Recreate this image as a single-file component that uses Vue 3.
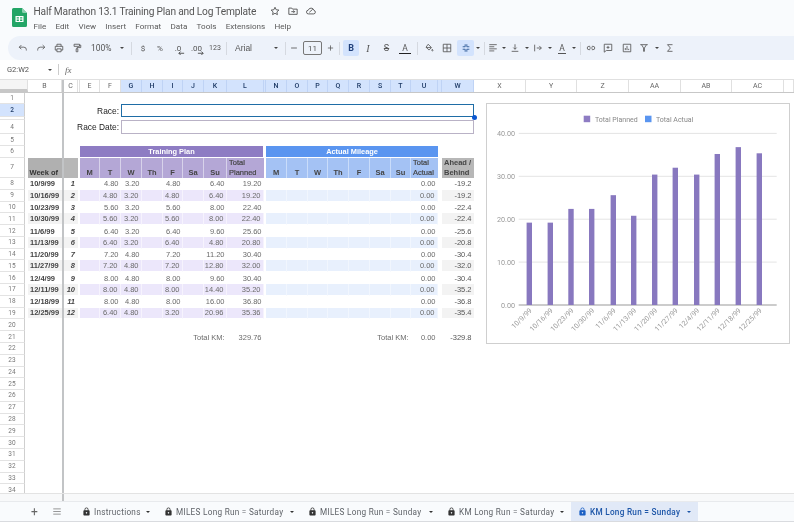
<script setup>
const colWidths = [25,3,34,2,14,2,20,21,21,21,20,21,23,37,2,21,21,20,21,21,21,20,27,4,32,52,51,52,52,51,52,10]
const gridCols = colWidths.map(w => w + 'px').join(' ')
const colNames = ['','','B','','C','','E','F','G','H','I','J','K','L','','N','O','P','Q','R','S','T','U','','W','X','Y','Z','AA','AB','AC','']
const headCells = colNames.map((name, i) => ({
  name, selected: i >= 8 && i <= 24, corner: i === 0, freeze: i === 3, hidden: name === '' && i > 3 && i < 25
}))

const menus = ['File','Edit','View','Insert','Format','Data','Tools','Extensions','Help']
const icons = {
  undo: 'M8 5 3 10l5 5M3 10h11a6 6 0 0 1 6 6v2',
  redo: 'M16 5l5 5-5 5M21 10H10a6 6 0 0 0-6 6v2',
  print: 'M7 8V3h10v5M7 17H3V8h18v9h-4M7 14h10v7H7z',
  paint: 'M5 3h13v5H5zM18 5h3v6h-9v3M10 14h4v7h-4z',
  fill: 'M10 3l8 8-6 6-7-7zM5 11h12M20 15c1 2 2 3 1 4s-2 0-2-1 0-1 1-3z',
  borders: 'M3 3h18v18H3zM12 3v18M3 12h18',
  merge: 'M10 3v6H4M14 3v6h6M10 21v-6H4M14 21v-6h6',
  align: 'M3 4h18M3 9h12M3 14h18M3 19h12',
  valign: 'M12 3v12M8 11l4 4 4-4M4 20h16',
  wrap: 'M4 4v16M9 12h11M15 7l5 5-5 5',
  link: 'M10 8H7a4 4 0 0 0 0 8h3M14 8h3a4 4 0 0 1 0 8h-3M8 12h8',
  comment: 'M3 3h18v15H8l-5 4zM12 7v7M8.5 10.5h7',
  chart: 'M3 3h18v18H3zM8 17v-5M12 17V7M16 17v-3',
  filter: 'M3 4h18M6 4l5 8v8h2v-8l5-8',
  sigma: 'M18 4H6l7 8-7 8h12',
  minus: 'M5 12h14',
  plus: 'M5 12h14M12 5v14'
}
const toolbar = [
  { w: 18, icon: 'undo' }, { w: 18, icon: 'redo' }, { w: 18, icon: 'print' }, { w: 17, icon: 'paint' },
  { w: 42, text: '100%', caret: true, cls: 'zoom' }, { w: 8, sep: true },
  { w: 16, text: '$' }, { w: 18, text: '%' }, { w: 18, text: '.0', arrow: 'l' }, { w: 19, text: '.00', arrow: 'r' }, { w: 18, text: '123', cls: 'small' },
  { w: 4, sep: true },
  { w: 53, text: 'Arial', caret: true, cls: 'font' }, { w: 8, sep: true },
  { w: 10, icon: 'minus' }, { w: 27, box: '11' }, { w: 9, icon: 'plus' }, { w: 8, sep: true },
  { w: 16, text: 'B', cls: 'bold on' }, { w: 18, text: 'I', cls: 'ital' }, { w: 19, text: 'S', cls: 'strike' },
  { w: 18, text: 'A', cls: 'colorA' }, { w: 6, sep: true },
  { w: 17, icon: 'fill' }, { w: 20, icon: 'borders' }, { w: 17, icon: 'merge', cls: 'on' }, { w: 8, caretOnly: true }, { w: 4, sep: true },
  { w: 14, icon: 'align' }, { w: 7, caretOnly: true }, { w: 16, icon: 'valign' }, { w: 7, caretOnly: true },
  { w: 16, icon: 'wrap' }, { w: 8, caretOnly: true }, { w: 16, text: 'A', cls: 'rot' }, { w: 7, caretOnly: true }, { w: 6, sep: true },
  { w: 15, icon: 'link' }, { w: 20, icon: 'comment' }, { w: 17, icon: 'chart' }, { w: 18, icon: 'filter' }, { w: 7, caretOnly: true }, { w: 20, icon: 'sigma' }
]

const dates = ['10/9/99','10/16/99','10/23/99','10/30/99','11/6/99','11/13/99','11/20/99','11/27/99','12/4/99','12/11/99','12/18/99','12/25/99']
const plan = [
  ['', '4.80','3.20','','4.80','','6.40','19.20'],
  ['', '4.80','3.20','','4.80','','6.40','19.20'],
  ['', '5.60','3.20','','5.60','','8.00','22.40'],
  ['', '5.60','3.20','','5.60','','8.00','22.40'],
  ['', '6.40','3.20','','6.40','','9.60','25.60'],
  ['', '6.40','3.20','','6.40','','4.80','20.80'],
  ['', '7.20','4.80','','7.20','','11.20','30.40'],
  ['', '7.20','4.80','','7.20','','12.80','32.00'],
  ['', '8.00','4.80','','8.00','','9.60','30.40'],
  ['', '8.00','4.80','','8.00','','14.40','35.20'],
  ['', '8.00','4.80','','8.00','','16.00','36.80'],
  ['', '6.40','4.80','','3.20','','20.96','35.36']
]
const behind = ['-19.2','-19.2','-22.4','-22.4','-25.6','-20.8','-30.4','-32.0','-30.4','-35.2','-36.8','-35.4']
const days = ['M','T','W','Th','F','Sa','Su']

const c = (text = '', cls = '', span = 1) => ({ text, cls, span })
const blanks = n => (n > 0 ? [c('', '', n)] : [])

function buildRow(n) {
  const edge = [c('', 'cellA'), ]
  if (n === 2 || n === 4) {
    return [...edge, c(), c('', 'fz'), c(n === 2 ? 'Race:' : 'Race Date:', 'lbl', 4),
      c('', n === 2 ? 'inp sel' : 'inp', 17), ...blanks(7)]
  }
  if (n === 6) {
    return [...edge, c(), c('', 'fz'), c(), c(), c('Training Plan', 'band purple', 8), c(),
      c('Actual Mileage', 'band blue', 8), c(), c(), ...blanks(7)]
  }
  if (n === 7) {
    return [...edge, c('Week of', 'weekhd'), c('', 'fz'), c('', 'chd'), c(),
      ...days.map(d => c(d, 'sub lp')), c('Total Planned', 'sub lp tot'), c(),
      ...days.map(d => c(d, 'sub lb')), c('Total Actual', 'sub lb tot'), c(),
      c('Ahead / Behind', 'ahead'), ...blanks(7)]
  }
  if (n >= 8 && n <= 19) {
    const i = n - 8
    const alt = i % 2 === 1
    const p = alt ? 'num pshade' : 'num'
    const a = alt ? 'num bshade' : 'num'
    return [...edge, c(dates[i], alt ? 'date dshade' : 'date'), c('', 'fz'),
      c(String(i + 1), alt ? 'wk dshade' : 'wk'), c(),
      ...plan[i].map(v => c(v, p)), c(),
      ...days.map(() => c('', a)), c('0.00', a), c(),
      c(behind[i], alt ? 'num dim dshade' : 'num dim'), ...blanks(7)]
  }
  if (n === 21) {
    return [...edge, c(), c('', 'fz'), c(), c(), ...blanks(6), c('Total KM:', 'num'), c('329.76', 'num'), c(),
      ...blanks(6), c('Total KM:', 'num'), c('0.00', 'num'), c(), c('-329.8', 'num dim'), ...blanks(7)]
  }
  return [...edge, c(), c('', 'fz'), ...blanks(28)]
}

const heights = { 1: 11, 2: 13, 3: 3, 4: 14, 5: 12, 6: 11.5, 7: 20.5 }
const rows = Array.from({ length: 34 }, (_, k) => {
  const n = k + 1
  return { n, h: (heights[n] || 11.79) + 'px', cells: buildRow(n) }
})

// chart
const yFor = v => 305 - v * 4.29
const ticks = [0, 10, 20, 30, 40].map(v => ({ v, label: v.toFixed(2), y: yFor(v) }))
const xs = [529.3,550.3,571,591.7,613.3,633.7,654.7,675.3,696.7,717.3,738.3,759.3]
const totals = [19.2,19.2,22.4,22.4,25.6,20.8,30.4,32,30.4,35.2,36.8,35.36]
const bars = xs.map((x, i) => ({ x, y: yFor(totals[i]), h: totals[i] * 4.29, date: dates[i] }))

const tabs = [
  { name: 'Instructions', w: 82 },
  { name: 'MILES Long Run = Saturday', w: 144 },
  { name: 'MILES Long Run = Sunday', w: 139 },
  { name: 'KM Long Run = Saturday', w: 131 },
  { name: 'KM Long Run = Sunday', w: 127, active: true }
]
const lock = 'M18 8h-1V6c0-2.76-2.24-5-5-5S7 3.24 7 6v2H6c-1.1 0-2 .9-2 2v10c0 1.1.9 2 2 2h12c1.1 0 2-.9 2-2V10c0-1.1-.9-2-2-2zm-6 9c-1.1 0-2-.9-2-2s.9-2 2-2 2 .9 2 2-.9 2-2 2zm3.1-9H8.9V6c0-1.71 1.39-3.1 3.1-3.1 1.71 0 3.1 1.39 3.1 3.1v2z'
</script>

<template>
  <div class="app">
    <header class="top">
      <svg class="logo" viewBox="0 0 15 19" width="15" height="19">
        <path d="M1.5 0H10l5 5v12.5a1.5 1.5 0 0 1-1.5 1.5h-12A1.5 1.5 0 0 1 0 17.500V1.500A1.500 1.500 0 0 1 1.500 0z" fill="#23a566"/>
        <path d="M10 0l5 5h-3.500A1.500 1.500 0 0 1 10 3.500z" fill="#8ed1b1"/>
        <path d="M3.500 8h8v6h-8zM4.700 9.200v1.300h2.200V9.200zm3.400 0v1.300h2.200V9.200zm-3.400 2.400v1.300h2.200v-1.300zm3.400 0v1.300h2.200v-1.300z" fill="#fff" fill-rule="evenodd"/>
      </svg>
      <div class="titles">
        <div class="title-row">
          <span class="doc-title">Half Marathon 13.1 Training Plan and Log Template</span>
          <svg class="ti star" viewBox="0 0 24 24"><path d="M12 3l2.800 6 6.500.8-4.800 4.400 1.300 6.500L12 17.500 6.200 20.700l1.300-6.500L2.700 9.800 9.200 9z"/></svg>
          <svg class="ti" viewBox="0 0 24 24"><path d="M2 5h7l2 2.500h11V20H2zM8 13.500h8M13 10.500l3 3-3 3"/></svg>
          <svg class="ti" viewBox="0 0 24 24"><path d="M6 19a4.500 4.500 0 0 1-.5-9A7 7 0 0 1 19 10.500 4.300 4.300 0 0 1 18.500 19zM8 15l8-7"/></svg>
        </div>
        <nav class="menus"><span v-for="m in menus" :key="m">{{ m }}</span></nav>
      </div>
    </header>

    <div class="toolbar">
      <div v-for="(t, i) in toolbar" :key="i" class="tool" :class="t.cls" :style="{ width: t.w + 'px' }">
        <span v-if="t.sep" class="sep"></span>
        <span v-else-if="t.caretOnly" class="caret"></span>
        <span v-else-if="t.box" class="sizebox">{{ t.box }}</span>
        <svg v-else-if="t.icon" class="ic" viewBox="0 0 24 24"><path :d="icons[t.icon]"/></svg>
        <template v-else>
          <span class="tt">{{ t.text }}</span>
          <svg v-if="t.arrow" class="arr" viewBox="0 0 8 5"><path :d="t.arrow === 'l' ? 'M7 2.500H1M3 .5 1 2.500l2 2' : 'M1 2.500h6M5 .5l2 2-2 2'"/></svg>
          <span v-if="t.caret" class="caret push"></span>
        </template>
      </div>
    </div>

    <div class="fbar">
      <span class="nameref">G2:W2</span>
      <span class="caret namecaret"></span>
      <span class="fsep"></span>
      <span class="fx">fx</span>
    </div>

    <div class="colhead" :style="{ gridTemplateColumns: gridCols }">
      <div v-for="(h, i) in headCells" :key="i" class="ch"
           :class="{ on: h.selected, corner: h.corner, fz: h.freeze, bare: i === 1 }">{{ h.name }}</div>
    </div>

    <div class="sheet">
      <div v-for="r in rows" :key="r.n" class="row" :style="{ height: r.h, gridTemplateColumns: gridCols }">
        <div class="rn" :class="{ on: r.n === 2 }"><span v-if="r.n !== 3">{{ r.n }}</span></div>
        <div v-for="(cell, j) in r.cells" :key="j" class="cell" :class="cell.cls"
             :style="cell.span > 1 ? { gridColumn: 'span ' + cell.span } : null"><span>{{ cell.text }}</span></div>
      </div>

      <span class="handle"></span>

      <div class="chart">
        <svg width="304" height="241" viewBox="486 103 304 241">
          <rect x="583.700" y="115.700" width="6.500" height="6.500" fill="#8e7cc3"/>
          <text x="595" y="121.700" class="lg">Total Planned</text>
          <rect x="645" y="115.700" width="6.500" height="6.500" fill="#5a95f0"/>
          <text x="656" y="121.700" class="lg">Total Actual</text>
          <g v-for="t in ticks" :key="t.v">
            <line x1="518.700" x2="776.700" :y1="t.y" :y2="t.y" :stroke="t.v === 0 ? '#999' : '#e4e4e4'" stroke-width="1"/>
            <text x="515" :y="t.y + 2.500" class="yl">{{ t.label }}</text>
          </g>
          <rect v-for="b in bars" :key="b.date" :x="b.x - 2.700" :y="b.y" width="5.400" :height="b.h" fill="#8878bf"/>
          <text v-for="b in bars" :key="'l' + b.date" class="xl" text-anchor="end"
                :transform="`translate(${b.x + 3} 311) rotate(-45)`">{{ b.date }}</text>
        </svg>
      </div>
    </div>

    <div class="strip"><span class="stripfz"></span></div>

    <footer class="tabs">
      <span class="tplus">+</span>
      <svg class="tlist" viewBox="0 0 24 24"><path d="M2 5h20M2 12h20M2 19h20"/></svg>
      <div v-for="t in tabs" :key="t.name" class="tab" :class="{ active: t.active }" :style="{ width: t.w + 'px' }">
        <svg class="lock" viewBox="3 0 18 23"><path :d="lock"/></svg>
        <span class="tname">{{ t.name }}</span>
        <span class="caret push"></span>
      </div>
    </footer>
  </div>
</template>

<style scoped>
.app { width: 794px; height: 522px; overflow: hidden; display: flex; flex-direction: column; background: #f9fbfd; font-family: Roboto, sans-serif; color: #444; filter: blur(.3px); }

.top { height: 36px; flex: none; display: flex; padding: 8px 0 0 11.5px; box-sizing: border-box; }
.logo { flex: none; }
.titles { margin-left: 7px; margin-top: -5.500px; }
.title-row { display: flex; align-items: center; height: 17px; }
.doc-title { font-size: 10.200px; letter-spacing: -.2px; color: #555; width: 236px; white-space: nowrap; }
.ti { width: 10px; height: 10px; margin-right: 8px; fill: none; stroke: #444; stroke-width: 2; }
.menus { display: flex; gap: 9.300px; font-size: 8.100px; color: #5a5a5a; margin-top: 1px; }

.toolbar { height: 24px; flex: none; margin-left: 8px; padding-left: 6px; display: flex; align-items: center; background: #edf2fa; border-radius: 12px 0 0 12px; }
.tool { height: 16px; flex: none; display: flex; align-items: center; justify-content: center; position: relative; box-sizing: border-box; border-radius: 2px; font-size: 8px; color: #555; }
.tool.on { background: #d3e3fd; color: #1f3f7a; }
.tool.on .ic { stroke: #24518f; }
.ic { width: 10px; height: 10px; fill: none; stroke: #555; stroke-width: 2; }
.sep { width: 1px; height: 13px; background: #d5d9e0; }
.caret { display: inline-block; width: 0; height: 0; border-left: 2.500px solid transparent; border-right: 2.500px solid transparent; border-top: 2.500px solid #444; }
.caret.push { margin-left: auto; }
.zoom { padding: 0 3px 0 6px; font-size: 8.500px; }
.font { padding: 0 3px 0 7px; font-size: 8.500px; font-family: "Liberation Sans", sans-serif; }
.small { font-size: 7px; }
.sizebox { width: 19px; height: 14px; border: 1px solid #777; border-radius: 2px; box-sizing: border-box; display: flex; align-items: center; justify-content: center; font-size: 8px; }
.bold { font-weight: 700; font-size: 9px; }
.ital { font-style: italic; font-family: "Liberation Serif", serif; font-size: 10px; }
.strike { text-decoration: line-through; font-size: 9px; }
.colorA .tt { font-size: 8.500px; border-bottom: 1.500px solid #222; padding: 0 3px; line-height: 10px; }
.rot .tt { font-size: 8.500px; border-bottom: 1px solid #555; padding: 0 1px; line-height: 10px; }
.arr { position: absolute; right: 2px; bottom: 1px; width: 7px; height: 4.500px; fill: none; stroke: #444; stroke-width: 1; }

.fbar { height: 19px; flex: none; background: #fff; display: flex; align-items: center; position: relative; padding-left: 7px; font-size: 7.500px; color: #555; }
.nameref { width: 41px; }
.namecaret { flex: none; }
.fsep { width: 1px; height: 11px; background: #ccc; margin-left: 6px; }
.fx { margin-left: 6px; font-family: "Liberation Serif", serif; font-style: italic; font-size: 9px; color: #666; }

.colhead { height: 14px; flex: none; display: grid; background: #fff; border-top: 1px solid #e0e0e0; border-bottom: 1px solid #c7c7c7; box-sizing: border-box; }
.ch { font-size: 7px; color: #666; display: flex; align-items: center; justify-content: center; box-sizing: border-box; border-right: 1px solid #e0e0e0; min-width: 0; overflow: hidden; }
.ch.on { background: #d3e3fd; color: #1f3b66; font-weight: 500; border-right-color: #bfd3f5; }
.ch.corner { background: #f5f5f5; border-bottom: 3px solid #c7c7c7; border-right: 0; }
.ch.bare { background: #f5f5f5; border-bottom: 3px solid #c7c7c7; }
.ch.fz { background: #c2c4c6; border: 0; }

.sheet { flex: 1; min-height: 0; overflow: hidden; position: relative; background: #fff; }
.row { display: grid; box-sizing: border-box; }
.rn { font-size: 6.500px; color: #777; background: #fff; display: flex; align-items: center; justify-content: center; box-sizing: border-box; border-right: 1px solid #cfcfcf; border-bottom: 1px solid #e3e3e3; overflow: hidden; }
.rn.on { background: #d3e3fd; color: #1f3b66; font-weight: 500; }
.cell { min-width: 0; box-sizing: border-box; display: flex; align-items: center; font-family: "Liberation Sans", sans-serif; font-size: 7.500px; color: #666; white-space: nowrap; }
.fz { background: #c2c4c6; }
.lbl { justify-content: flex-end; padding-right: 2px; font-size: 8.400px; color: #222; }
.inp { border: 1px solid #b9b2c6; }
.inp.sel { border: 1.500px solid #1f6da6; }
.band { justify-content: center; color: #fff; font-weight: 700; font-size: 7.400px; border-bottom: 1px solid #fff; }
.purple { background: #8e7cc3; margin-right: 1px; }
.blue { background: #5a95f0; }
.sub { align-items: flex-end; justify-content: center; font-weight: 700; color: #444; border-right: 1px solid #d7d2ea; padding-bottom: 1px; }
.lp { background: #b4a7d6; }
.lb { background: #a4c2f4; border-right-color: #c9dcfa; }
.tot { white-space: normal; line-height: 9.500px; justify-content: flex-start; padding-left: 2px; font-weight: 400; border-right: 0; -webkit-text-stroke: .2px #444; }
.weekhd { background: #b0b0b0; align-items: flex-end; padding: 0 0 1px 1.500px; font-weight: 700; color: #333; margin-right: 0; }
.chd { background: #b7b7b7; }
.ahead { background: #b7b7b7; font-weight: 700; color: #444; white-space: normal; line-height: 9.500px; align-items: flex-end; padding: 0 0 1px 2px; }
.date { color: #444; font-weight: 700; padding-left: 2px; }
.wk { color: #444; font-weight: 700; font-style: italic; justify-content: flex-end; padding-right: 3px; }
.dshade { background: #f3f3f3; border-bottom: 1px solid #fff; }
.num { justify-content: flex-end; padding-right: 2.500px; color: #6a6a6a; }
.dim { color: #555; }
.pshade { background: #ece7fb; border-right: 1px solid #f6f3fd; border-bottom: 1px solid #fff; }
.bshade { background: #e8f0fd; border-right: 1px solid #f1f6fe; border-bottom: 1px solid #fff; }

.handle { position: absolute; left: 471.500px; top: 21.500px; width: 5px; height: 5px; border-radius: 50%; background: #0b57d0; }
.chart { position: absolute; left: 486px; top: 10px; width: 304px; height: 241px; box-sizing: border-box; outline: 1px solid #cfcfcf; outline-offset: -1px; background: #fff; }
.chart svg { display: block; font-family: Roboto, sans-serif; }
.lg { font-size: 7px; fill: #888; }
.yl { font-size: 7.200px; fill: #999; text-anchor: end; }
.xl { font-size: 7px; fill: #9a9a9a; }

.strip { height: 8px; flex: none; background: #f8f9fa; border-top: 1px solid #e3e3e3; box-sizing: border-box; position: relative; }
.stripfz { position: absolute; left: 62px; top: 0; width: 2px; height: 100%; background: #c2c4c6; }

.tabs { height: 21px; flex: none; display: flex; align-items: stretch; background: #f9fbfd; border-top: 1px solid #e8eaed; border-bottom: 1px solid #d9dbdf; box-sizing: border-box; padding-left: 75px; position: relative; }
.tplus { position: absolute; left: 31px; top: 2px; font-size: 12px; color: #666; line-height: 16px; }
.tlist { position: absolute; left: 52px; top: 5px; width: 10px; height: 9px; fill: none; stroke: #777; stroke-width: 2; }
.tab { flex: none; display: flex; align-items: center; box-sizing: border-box; padding: 0 7px 0 8px; font-size: 8.200px; letter-spacing: .28px; color: #5f6368; white-space: nowrap; }
.lock { width: 7px; height: 9px; fill: #333; margin-right: 4px; flex: none; }
.tab .caret { border-top-color: #333; flex: none; }
.tab.active { background: #e1e9f7; color: #1d56a8; font-weight: 500; }
.tab.active .lock { fill: #1a5fc4; }
.tab.active .caret { border-top-color: #1d56a8; }
</style>
